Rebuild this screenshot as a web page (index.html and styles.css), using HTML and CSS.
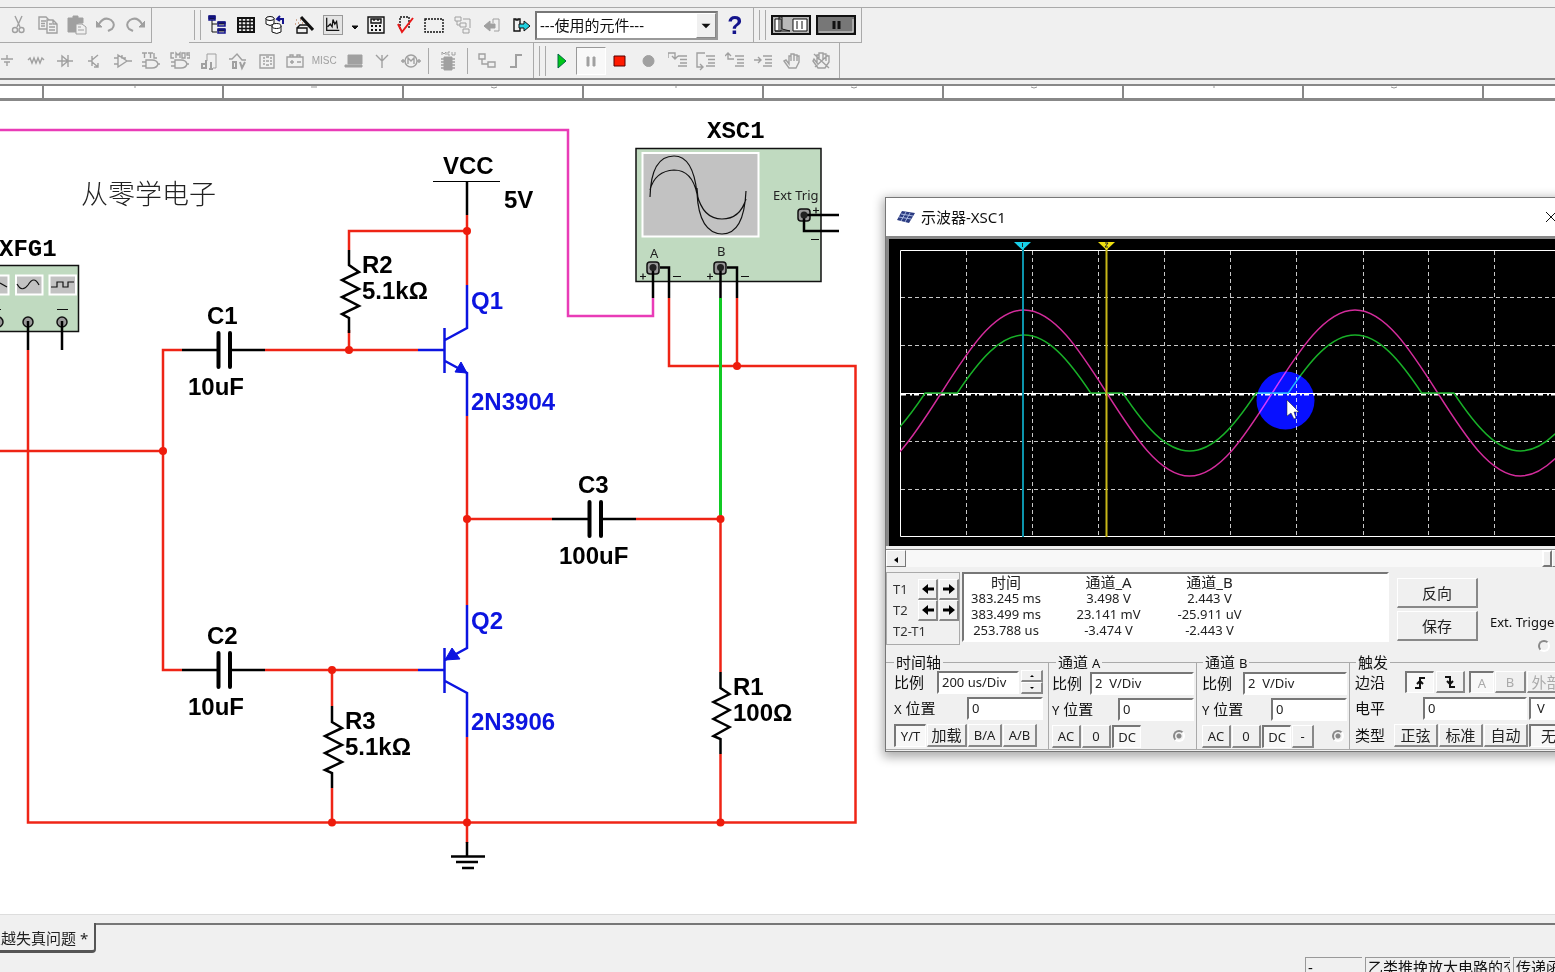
FILE: index.html
```html
<!DOCTYPE html>
<html lang="zh-CN">
<head>
<meta charset="utf-8">
<title>交越失真问题</title>
<link rel="stylesheet" href="styles.css">
</head>
<body>
<header class="toolbars">
  <div class="bar">
    <div class="panel panel-edit">
      <div class="icons icons-5 muted">
        <button class="tool" aria-label="剪切"><svg viewBox="0 0 20 20"><path class="mid" d="M6 1l5 11M13 1L8 12"/><circle class="mid" cx="6" cy="15" r="2.500"/><circle class="mid" cx="12.500" cy="15" r="2.500"/></svg></button>
        <button class="tool" aria-label="复制"><svg viewBox="0 0 20 20"><path class="mid" d="M1 2h7l3 3v9H1zM3 6h5M3 8.500h4M3 11h4"/><path class="paper mid" d="M9 5h6l4 4v9H9zM15 5v4h4M11 9h3M11 12h6M11 15h6"/></svg></button>
        <button class="tool" aria-label="粘贴"><svg viewBox="0 0 20 20"><path class="solid" d="M1 3h5V1h5v2h5v5h-5v9H1z"/><path class="paper" d="M5 4h7M9 9h6l4 3v7H9zM11 12h3M11 15h6"/></svg></button>
        <button class="tool" aria-label="撤销"><svg viewBox="0 0 20 20"><path class="thick" d="M3 9Q8 1 15 5q5 4 1 9l-4 2"/><path class="solid" d="M0 6v6h6z"/></svg></button>
        <button class="tool" aria-label="重做"><svg viewBox="0 0 20 20"><path class="thick" d="M17 9Q12 1 5 5 0 9 4 14l4 2"/><path class="solid" d="M20 6v6h-6z"/></svg></button>
      </div>
    </div>
    <div class="panel panel-main">
      <span class="grip"></span>
      <div class="icons icons-5">
        <button class="tool" aria-label="设计工具箱"><svg viewBox="0 0 20 20"><path d="M5 5v12h5M5 9h5"/><path class="navy" d="M2 1h6v3H2zM11 7h7v2h-7zM11 14h7v2h-7z"/><path class="navybox" d="M2 1h6v4H2zM11 7h7v4h-7zM11 14h7v4h-7z"/></svg></button>
        <button class="tool" aria-label="电子表格"><svg viewBox="0 0 20 20"><path class="thick" d="M2 3h16v14H2z"/><path class="mid" d="M6 3v14M10 3v14M14 3v14M2 6.500h16M2 10h16M2 13.500h16"/></svg></button>
        <button class="tool" aria-label="数据库"><svg viewBox="0 0 20 20"><path class="white" d="M1 3v6q4 3 8 0V3M7 11v6q5 3 9 0v-6"/><ellipse class="white" cx="5" cy="3.500" rx="4" ry="2"/><ellipse class="white" cx="11.500" cy="11" rx="4.500" ry="2.500"/><path class="navyline" d="M12 4h6v5M15 1l-3 3 3 2"/></svg></button>
        <button class="tool" aria-label="元件向导"><svg viewBox="0 0 20 20"><path class="heavy" d="M7 2l12 13"/><path class="mid" d="M3 13l3-3h9M3 13h10v5H3z"/><path class="gold" d="M2 5h1M4 8h1M1 9h1M6 5h1M8 8h1"/></svg></button>
        <button class="tool framed" aria-label="图形编辑器"><svg viewBox="0 0 20 20"><path class="mid" d="M3 2v14h14M4 12l3-3 2 3 1-8 2 5 2-3 1 8"/></svg></button>
      </div>
      <button class="drop" aria-label="图形选项"><svg viewBox="0 0 8 5"><path class="solid" d="M1 1h6L4 4z"/></svg></button>
      <div class="icons icons-6">
        <button class="tool" aria-label="后处理器"><svg viewBox="0 0 20 20"><path class="mid" d="M2 2h16v16H2zM5 4h10v4H5zM8 4v2M12 4v2"/><path class="thick" d="M5 11h2M9 11h2M13 11h2M5 15h2M9 15h2M13 15h2"/></svg></button>
        <button class="tool" aria-label="电气规则检查"><svg viewBox="0 0 20 20"><path class="mid" stroke-dasharray="2 1" d="M5 14V2h9v12"/><path class="redline" d="M3 9l4 8L18 3"/></svg></button>
        <button class="tool" aria-label="捕获区域"><svg viewBox="0 0 20 20"><path class="mid" stroke-dasharray="2 1" d="M1 4h18v13H1z"/></svg></button>
        <button class="tool muted" aria-label="转到父电路图"><svg viewBox="0 0 20 20"><path d="M2 2h6v4H2zM7 8h6v4H7zM10 14h6v4h-6zM4 6v4h3M10 4h7v9"/></svg></button>
        <button class="tool muted" aria-label="反向注解"><svg viewBox="0 0 20 20"><path class="solid" d="M2 11l6-5v3h5v4H8v3z"/><path d="M11 8V4h6v12h-5"/></svg></button>
        <button class="tool" aria-label="正向注解"><svg viewBox="0 0 20 20"><path class="mid" d="M3 4v12h6V4H7v1H5V4z"/><path class="cyan" d="M8 9h5V6l6 5-6 5v-3H8z"/></svg></button>
      </div>
      <div class="combo">
        <select aria-label="使用的元件"><option>---使用的元件---</option></select>
        <svg class="combo-arrow" viewBox="0 0 20 22"><path class="solid" d="M5 9h10l-5 5z"/></svg>
      </div>
      <button class="tool help" aria-label="帮助">?</button>
    </div>
    <div class="panel panel-sim">
      <span class="grip"></span>
      <button class="switch" aria-label="仿真开关"><svg viewBox="0 0 40 20"><path class="switch-face" d="M1 1h38v18H1z"/><path class="white" d="M22 4h14v12H22z"/><path class="white" d="M4 4h6v12H4z"/><path d="M8 15V2l3 0v12l8 2H4M26 6v8M31 6v8"/></svg></button>
      <button class="switch" aria-label="暂停开关"><svg viewBox="0 0 40 20"><path class="switch-dark" d="M1 1h38v18H1z"/><path class="light" d="M3 17h34V4"/><path class="heavy" d="M18 6v8M23 6v8"/></svg></button>
    </div>
  </div>
  <div class="bar bar-second">
    <div class="panel panel-parts">
      <div class="icons icons-15 muted">
        <button class="tool" aria-label="电源"><svg viewBox="0 0 20 20"><path class="mid" d="M10 4v4M4 8h12M7 11h6M10 11v4"/></svg></button>
        <button class="tool" aria-label="电阻"><svg viewBox="0 0 20 20"><path class="mid" d="M2 9l2-2 2 5 2-5 2 5 2-5 2 5 2-5 2 2"/></svg></button>
        <button class="tool" aria-label="二极管"><svg viewBox="0 0 20 20"><path class="mid" d="M2 10h16M7 5v10l6-5zM13 4v12"/></svg></button>
        <button class="tool" aria-label="晶体管"><svg viewBox="0 0 20 20"><path class="mid" d="M4 10h4M8 5v10M8 9l6-5M8 11l6 5M10 16h4v-4"/></svg></button>
        <button class="tool" aria-label="运放"><svg viewBox="0 0 20 20"><path class="mid" d="M5 4v12l9-6zM1 7h4M1 13h4M14 10h5M9 4v3h4"/></svg></button>
        <button class="tool" aria-label="TTL"><svg viewBox="0 0 20 20"><path class="mid" d="M1 2h5M3.500 2v5M7 2h5M9.500 2v5M13 2v5h3M5 9h6q5 0 6 4-1 4-6 4H5zM1 11h4M1 15h4M17 13h2"/></svg></button>
        <button class="tool" aria-label="CMOS"><svg viewBox="0 0 20 20"><path class="mid" d="M4 2H1v5h3M6 7V2l2 2 2-2v5M12 2h3v5h-3zM20 2h-3v2h3v3h-3M5 9h6q5 0 6 4-1 4-6 4H5zM1 11h4M1 15h4M17 13h2"/></svg></button>
        <button class="tool" aria-label="数字元件"><svg viewBox="0 0 20 20"><path d="M8 10V3h9v14h-3"/><path class="thick" d="M7 9v9M7 13H3v4h4M12 11v7M10 18h4"/></svg></button>
        <button class="tool" aria-label="混合元件"><svg viewBox="0 0 20 20"><path class="mid" d="M1 8h3l5-5 5 6h4"/><path class="thick" d="M5 11h3v6H5zM12 11l2 6 3-6"/></svg></button>
        <button class="tool" aria-label="指示器"><svg viewBox="0 0 20 20"><path class="mid" d="M3 4h14v13H3zM6 7h2M6 10h2M6 13h2M13 7h2M13 10h2M13 13h2M9 6h3M9 10h3M9 14h3"/></svg></button>
        <button class="tool" aria-label="电源元件"><svg viewBox="0 0 20 20"><path class="mid" d="M2 6h16v10H2zM5 6V4h3v2M12 6V4h3v2M5 11h4M7 9v4M12 11h4"/></svg></button>
        <button class="tool misc">MISC</button>
        <button class="tool" aria-label="外设"><svg viewBox="0 0 20 20"><path class="solid" d="M5 4h14v9H5zM2 14h17v2H2z"/></svg></button>
        <button class="tool" aria-label="射频"><svg viewBox="0 0 20 20"><path class="mid" d="M4 4l6 6 6-6M10 4v13"/></svg></button>
        <button class="tool" aria-label="机电"><svg viewBox="0 0 20 20"><circle class="mid" cx="10" cy="10" r="6"/><path class="mid" d="M0 10h4M16 10h4M7 13V7l3 3 3-3v6M2 8v4M18 8v4"/></svg></button>
      </div>
      <span class="sep"></span>
      <button class="tool muted lone" aria-label="MCU"><svg viewBox="0 0 20 20"><path d="M4 4V1l2 2 2-2v3M12 1h-2v3h2M14 1v3h3V1"/><path class="solid" d="M6 6h8v13H6z"/><path class="mid" d="M3 8h14M3 11h14M3 14h14M3 17h14"/></svg></button>
      <span class="sep"></span>
      <button class="tool muted" aria-label="层次块"><svg viewBox="0 0 20 20"><path class="mid" d="M2 3h6v5H2zM11 11h7v5h-7zM5 8v5h6"/></svg></button>
      <button class="tool muted" aria-label="总线"><svg viewBox="0 0 20 20"><path class="thick" d="M4 16h6V4h6"/></svg></button>
    </div>
    <div class="panel panel-run">
      <span class="grip"></span>
      <div class="icons icons-10 muted">
        <button class="tool" aria-label="运行"><svg viewBox="0 0 20 20"><path class="play" d="M7 3v14l8-7z"/></svg></button>
        <button class="tool pressed" aria-label="暂停"><svg viewBox="0 0 20 20"><path class="solid" d="M6 6h2v9H6zM12 6h2v9h-2z"/></svg></button>
        <button class="tool" aria-label="停止"><svg viewBox="0 0 20 20"><path class="stop" d="M4 5h11v10H4z"/></svg></button>
        <button class="tool" aria-label="断点"><svg viewBox="0 0 20 20"><circle class="solid" cx="9.500" cy="10" r="5.500"/></svg></button>
        <button class="tool" aria-label="步入"><svg viewBox="0 0 20 20"><path class="mid" d="M0 7V2h7v6M4 5l3 3 3-3M10 5h9M12 8.500h7M12 12h7M10 15h9"/></svg></button>
        <button class="tool" aria-label="步过"><svg viewBox="0 0 20 20"><path class="mid" d="M9 2H1v14h6M4 13l3 3-3 3M10 5h9M12 8.500h7M12 12h7M10 15h9"/></svg></button>
        <button class="tool" aria-label="步出"><svg viewBox="0 0 20 20"><path class="mid" d="M3 2v6h6M0 5l3-3 3 3M10 5h9M12 8.500h7M12 12h7M10 15h9"/></svg></button>
        <button class="tool" aria-label="运行到光标"><svg viewBox="0 0 20 20"><path class="mid" d="M1 9h7M5 6l3 3-3 3M10 5h9M12 8.500h7M12 12h7M10 15h9"/></svg></button>
        <button class="tool" aria-label="切换断点"><svg viewBox="0 0 20 20"><path class="mid" d="M2 10l5 7h7l3-6V5h-2v5V4h-3v6V3H9v7V5H7v8L4 9z"/></svg></button>
        <button class="tool" aria-label="清除断点"><svg viewBox="0 0 20 20"><path class="mid" d="M2 10l5 7h7l4-6V5h-3v5V3h-3v6V2H8v7V4H6v8L3 8zM3 3l15 14M17 4L4 16"/></svg></button>
      </div>
    </div>
  </div>
</header>

<svg class="ruler" aria-hidden="true"><path d="M43 0v13M223 0v13M403 0v13M583 0v13M763 0v13M943 0v13M1123 0v13M1303 0v13M1483 0v13"/><path class="digit" d="M134 1h2M311 1h6M491 1q3 2 6 0M675 1h2M851 1q3 2 6 0M1031 1q3 2 6 0M1213 1h2M1391 1q3 2 6 0"/></svg>

<main class="canvas">
  <svg class="schematic" aria-label="乙类推挽放大电路">
    <g transform="translate(0 -101)">
      <g class="wire">
        <path class="w-pink" d="M0 130H568V316H653V298"/>
        <path class="w-red" d="M28 350V822.500H855.500V366H669V298M737 298V366M0 451H163M182 350H163V670H182M265 350H418M349 330V350M349 250V231H467M467 215V285M467 416V605M467 519H552M636 519H720.500V672M467 737V843M265 670H418M332 670V706M332 788V822M720.500 754V822"/>
        <path class="w-green" d="M720.500 298V519"/>
      </g>
      <g class="part">
        <path d="M467 182V215M182 350H217M231 350H265M182 670H217M231 670H265M552 519H589M603 519H636M467 842V856M349 250v15l10 7-17 8 17 9-17 8 17 9-17 8 7 4V333M332 706v16l10 6-17 8 17 9-17 8 17 9-17 8 7 3v15M720.500 672v16l9 6-16 8 16 8-16 9 16 8-16 9 7 3v15"/>
        <path class="thin" d="M433 181.500H500"/>
        <path class="plate" d="M218.500 333v34M230 333v34M218.500 653v34M230 653v34M589.500 502v34M601 502v34"/>
        <path d="M451 856.500h34M456 862h22M462 868h12"/>
      </g>
      <g class="transistor">
        <path d="M467 285v43l-22 12M444.500 328v45M418 350h26M445 361l22 12v43M467 605v43l-22 12M444.500 648v45M418 670h26M445 681l22 12v44"/>
        <path class="fill" d="M467 373l-12-1 6-10zM445 660l7-12 8 11z"/>
      </g>
      <g class="dots"><circle cx="467" cy="231" r="4"/><circle cx="349" cy="350" r="4"/><circle cx="163" cy="451" r="4"/><circle cx="467" cy="519" r="4"/><circle cx="720.500" cy="519" r="4"/><circle cx="737" cy="366" r="4"/><circle cx="332" cy="670" r="4"/><circle cx="332" cy="822.500" r="4"/><circle cx="467" cy="822.500" r="4"/><circle cx="720.500" cy="822.500" r="4"/></g>
      <g class="instrument">
        <path class="case" d="M-30 265.500H78.500V331.500H-30zM636 148.500H821V281.500H636z"/>
        <path class="screen" d="M-20 275.500H8.500V294.500H-20zM16 275.500H42.500V294.500H16zM49.500 275.500H76V294.500H49.500zM642.500 153H758.500V236.500H642.500z"/>
        <path class="trace" d="M0 283l7 4M17 284q5 9 11 1 6-10 11 0M51 287h6v-5h6v5h5v-5h6M57 309.500h11M0 309.500h1M650 197q1-41 24-41 19 0 23 37 2 40 25 41 22 0 24-43M650 190q5-19 24-20 18 0 23 24 6 25 25 25 18 0 24-20M697 188l1 11"/>
        <g class="lead"><circle cx="-2" cy="322" r="5"/><circle cx="28" cy="322" r="5"/><circle cx="62" cy="322" r="5"/><rect x="647" y="262" width="12" height="12" rx="3"/><rect x="714" y="262" width="12" height="12" rx="3"/><rect x="798" y="209" width="12" height="12" rx="3"/></g>
        <path class="pin" d="M28 321V350M62 321V350M653 268V298M660 267.500H669V298M720.500 268V298M727 267.500H737V298M804 215H839M804 215V231H839"/>
        <g><circle cx="653" cy="267.500" r="3.500"/><circle cx="720.500" cy="267.500" r="3.500"/><circle cx="804" cy="215" r="3.500"/></g>
        <path class="trace" d="M640 276.500h6M643 273.500v6M673 276.500h8M707 276.500h6M710 273.500v6M741 276.500h8M813 210.500h6M816 207.500v6M811 239.500h8"/>
        <text x="773" y="200">Ext Trig</text><text x="650" y="258">A</text><text x="717" y="256">B</text>
      </g>
      <g class="label"><text x="443" y="174">VCC</text><text x="504" y="208">5V</text><text x="362" y="273">R2</text><text x="362" y="299">5.1kΩ</text><text x="207" y="324">C1</text><text x="188" y="395">10uF</text><text x="578" y="493">C3</text><text x="559" y="564">100uF</text><text x="207" y="644">C2</text><text x="188" y="715">10uF</text><text x="345" y="729">R3</text><text x="345" y="755">5.1kΩ</text><text x="733" y="695">R1</text><text x="733" y="721">100Ω</text></g>
      <g class="label blue"><text x="471" y="309">Q1</text><text x="471" y="410">2N3904</text><text x="471" y="629">Q2</text><text x="471" y="730">2N3906</text></g>
      <g class="label mono"><text x="707" y="138">XSC1</text><text x="-1" y="256">XFG1</text></g>
      <text class="note" x="81" y="204">从零学电子</text>
    </g>
  </svg>

  <section class="window" aria-label="示波器-XSC1">
    <div class="titlebar">
      <svg class="app-icon" viewBox="0 0 20 14"><path class="chip" d="M6 1l13 2-6 10L1 10z"/><path class="chip-line" d="M5 4l12 2M3 7l12 2M10 2L5 11M14 3L9 12"/></svg>
      <span class="title">示波器-XSC1</span>
      <button class="close" aria-label="关闭"><svg viewBox="0 0 12 12"><path d="M1 1l10 10M11 1L1 11"/></svg></button>
    </div>
    <div class="scope">
      <svg class="scope-view" aria-label="波形">
        <defs><clipPath id="plot"><path d="M900 250H1600V537H900z"/></clipPath></defs>
        <g transform="translate(-889 -239)">
          <path class="grid" d="M966.500 251V537M1032.500 251V537M1098.500 251V537M1164.500 251V537M1230.500 251V537M1296.500 251V537M1363.500 251V537M1428.500 251V537M1494.500 251V537M901 297.500H1600M901 345.500H1600M901 441.500H1600M901 489.500H1600"/>
          <path class="axis" d="M901 393.500H1600"/><path class="axis-ticks" d="M901 394.500H1600"/>
          <path class="frame" d="M1600 250.500H900.500V536.500H1600"/>
          <g clip-path="url(#plot)">
            <path class="ch-a" d="M858.500 476c30 0 55.750-40.500 82.750-83c27-42.500 52.800-83 82.750-83c30 0 55.750 40.500 82.750 83c27 42.500 52.800 83 82.750 83c30 0 55.750-40.500 82.750-83c27-42.500 52.800-83 82.750-83c30 0 55.750 40.500 82.750 83c27 42.500 52.800 83 82.750 83c30 0 55.750-40.500 82.750-83"/>
            <path class="ch-b" d="M858.500 451c24 0 44.700-25 66.700-58h32.100c22-33 43-58 66.700-58c24 0 44.700 25 66.700 58h32.100c22 33 43 58 66.700 58c24 0 44.700-25 66.700-58h32.100c22-33 43-58 66.700-58c24 0 44.700 25 66.700 58h32.100c22 33 43 58 66.700 58c24 0 44.700-25 66.700-58"/>
          </g>
          <path class="cur-1" d="M1023 246V537"/><path class="cur-2" d="M1106.500 246V537"/>
          <path class="flag-1" d="M1014 242h17l-8.500 8z"/><path class="flag-2" d="M1098 242h17l-8.500 8z"/>
          <path class="flag-mark" d="M1022.500 243v4M1105 243h3l-3 4h3"/>
          <circle class="halo" cx="1285.500" cy="400.500" r="29"/>
          <path class="pointer" d="M1287 400v16l4-3 3 6 2-1-2-6h5z"/>
        </g>
      </svg>
    </div>
    <div class="scroll"><button class="scroll-left" aria-label="向左"><svg viewBox="0 0 6 8"><path class="solid" d="M5 1v6L1 4z"/></svg></button><span class="scroll-thumb"></span><button class="scroll-right" aria-label="向右"></button></div>
    <div class="measure">
      <div class="markers">
        <span>T1</span><button class="btn step" aria-label="T1 左"><svg viewBox="0 0 12 12"><path d="M0 6l6-5v3.500h6v3H6V11z"/></svg></button><button class="btn step" aria-label="T1 右"><svg viewBox="0 0 12 12"><path d="M12 6L6 1v3.500H0v3h6V11z"/></svg></button>
        <span>T2</span><button class="btn step" aria-label="T2 左"><svg viewBox="0 0 12 12"><path d="M0 6l6-5v3.500h6v3H6V11z"/></svg></button><button class="btn step" aria-label="T2 右"><svg viewBox="0 0 12 12"><path d="M12 6L6 1v3.500H0v3h6V11z"/></svg></button>
        <span class="diff">T2-T1</span>
      </div>
      <div class="readout">
        <table>
          <thead><tr><th>时间</th><th>通道_A</th><th>通道_B</th></tr></thead>
          <tbody>
            <tr><td>383.245 ms</td><td>3.498 V</td><td>2.443 V</td></tr>
            <tr><td>383.499 ms</td><td>23.141 mV</td><td>-25.911 uV</td></tr>
            <tr><td>253.788 us</td><td>-3.474 V</td><td>-2.443 V</td></tr>
          </tbody>
        </table>
      </div>
      <div class="actions"><button class="btn cjk">反向</button><button class="btn cjk">保存</button></div>
      <label class="ext"><span>Ext. Trigger</span><input type="radio" name="ext" disabled></label>
    </div>
    <div class="groups">
      <fieldset class="group g-time">
        <legend>时间轴</legend>
        <div class="field"><label for="tb">比例</label><input id="tb" class="wide" value="200 us/Div"><span class="spin"><button class="btn" aria-label="增加"><svg viewBox="0 0 6 4"><path d="M1 3h4L3 1z"/></svg></button><button class="btn" aria-label="减少"><svg viewBox="0 0 6 4"><path d="M1 1h4L3 3z"/></svg></button></span></div>
        <div class="field"><label for="xp"><span class="latin">X</span> 位置</label><input id="xp" value="0"></div>
        <div class="modes"><button class="btn down">Y/T</button><button class="btn cjk">加载</button><button class="btn">B/A</button><button class="btn">A/B</button></div>
      </fieldset>
      <fieldset class="group g-a">
        <legend>通道 <span class="latin">A</span></legend>
        <div class="field"><label for="as">比例</label><input id="as" class="scale" value="2  V/Div"></div>
        <div class="field"><label for="ap"><span class="latin">Y</span> 位置</label><input id="ap" value="0"></div>
        <div class="modes"><button class="btn">AC</button><button class="btn">0</button><button class="btn down">DC</button><input class="dot" type="radio" name="cha" aria-label="通道 A 端子" checked disabled></div>
      </fieldset>
      <fieldset class="group g-b">
        <legend>通道 <span class="latin">B</span></legend>
        <div class="field"><label for="bs">比例</label><input id="bs" class="scale" value="2  V/Div"></div>
        <div class="field"><label for="bp"><span class="latin">Y</span> 位置</label><input id="bp" value="0"></div>
        <div class="modes"><button class="btn">AC</button><button class="btn">0</button><button class="btn down">DC</button><button class="btn minus">-</button><input class="dot" type="radio" name="chb" aria-label="通道 B 端子" checked disabled></div>
      </fieldset>
      <fieldset class="group g-trig">
        <legend>触发</legend>
        <div class="field"><span class="name">边沿</span><span class="edges"><button class="btn down" aria-label="上升沿"><svg viewBox="0 0 12 14"><path d="M1 12h5V2h5M3 8l3-3 3 3"/></svg></button><button class="btn" aria-label="下降沿"><svg viewBox="0 0 12 14"><path d="M1 2h5v10h5M3 6l3 3 3-3"/></svg></button></span><span class="sources"><button class="btn down" disabled>A</button><button class="btn" disabled>B</button><button class="btn cjk" disabled>外部</button></span></div>
        <div class="field"><label for="lv">电平</label><input id="lv" class="level" value="0"><input class="unit" aria-label="单位" value="V"></div>
        <div class="modes"><span class="name">类型</span><button class="btn cjk">正弦</button><button class="btn cjk">标准</button><button class="btn cjk">自动</button><button class="btn cjk down none">无</button></div>
      </fieldset>
    </div>
  </section>
</main>

<footer class="foot">
  <nav class="tabs"><a class="tab" href="#">交越失真问题 *</a></nav>
  <div class="status"><span class="cell cell-dash">-</span><span class="cell cell-name">乙类推挽放大电路的交</span><span class="cell cell-fn">传递函数</span></div>
</footer>
</body>
</html>
```
FILE: styles.css
```css
* { box-sizing: border-box; }

body {
  margin: 0;
  height: 100vh;
  display: flex;
  flex-direction: column;
  overflow: hidden;
  background: #f0f0f0;
  color: #111;
  font: 13px/16px "Noto Sans", "Noto Sans CJK SC", sans-serif;
}

button { margin: 0; padding: 0; border: 0; background: none; color: inherit; font: inherit; }
input, select { margin: 0; font: inherit; color: inherit; }

/* Toolbars */
.toolbars { flex: none; padding-top: 7px; border-bottom: 2px solid #888; }
.bar { display: flex; height: 36px; border-top: 1px solid #aaa; }
.bar-second { height: 35px; border-top: 0; }
.panel { display: flex; align-items: center; border-right: 1px solid #aaa; border-bottom: 1px solid #aaa; }
.bar-second .panel { border-bottom: 0; }
.panel-edit { width: 152px; padding-left: 5px; }
.panel-main { margin-left: 37px; width: 565px; padding-left: 5px; }
.panel-sim { width: 108px; padding-left: 5px; gap: 5px; }
.panel-parts { width: 534px; }
.panel-run { width: 306px; padding-left: 5px; }
.grip { flex: none; width: 7px; height: 30px; border: solid #aaa; border-width: 0 1px; margin-right: 1px; }
.panel-sim .grip { margin-right: 0; }
.icons { display: flex; flex: none; }
.icons .tool { flex: 1; }
.icons-5 { width: 144px; }
.icons-6 { width: 173px; }
.icons-10 { width: 288px; }
.icons-15 { width: 432px; margin-left: -7px; }
.panel-main .icons-5 { margin-left: 1px; }
.tool { display: flex; flex: none; align-items: center; justify-content: center; width: 29px; height: 28px; }
.tool svg { width: 20px; height: 20px; }
.tool svg, .drop svg, .switch svg { fill: none; stroke: #111; stroke-width: 1; }
.toolbars .muted svg, .toolbars .muted .tool svg, .toolbars .tool.muted svg { stroke: #a0a0a0; }
.muted { color: #a0a0a0; }
.toolbars .mid { stroke-width: 1.400; }
.toolbars .thick { stroke-width: 2; }
.toolbars .heavy { stroke-width: 3; }
.toolbars .solid { fill: #111; }
.toolbars .muted .solid { fill: #a0a0a0; }
.paper { fill: #f0f0f0; }
.white { fill: #fff; }
.navy { fill: #14148c; }
.navybox { stroke: #14148c; stroke-width: 1.500; }
.light { stroke: #ddd; }
.navyline { stroke: #14148c; stroke-width: 2; }
.gold { stroke: #b06030; }
.redline { stroke: #e81818; stroke-width: 2; }
.cyan { fill: #20d0e0; }
.toolbars .play { fill: #00c818; stroke: #064; }
.toolbars .stop { fill: #ff1a00; stroke: #500; }
.framed svg { border: 1px solid #999; background: #e4e4e4; }
.drop { width: 15px; height: 28px; }
.drop svg { width: 8px; height: 5px; }
.misc { font: 11px/16px "Liberation Sans", sans-serif; font-size: 10px; }
.toolbars .pressed { border: 1px solid; border-color: #999 #fff #fff #999; background: #f8f8f8; }
.sep { flex: none; width: 1px; height: 26px; background: #aaa; margin: 0 4px; }
.panel-parts .sep:first-of-type { margin-left: 3px; }
.lone { width: 30px; }
.combo { display: flex; flex: none; width: 183px; height: 29px; border: 2px solid; border-color: #777 #999 #999 #777; background: #fff; }
.combo select { flex: 1; min-width: 0; padding: 0 3px; border: 0; background: #fff; appearance: none; font-size: 15px; }
.combo-arrow { width: 20px; background: #f0f0f0; border: 1px solid; border-color: #fff #888 #888 #fff; }
.help { width: 34px; color: #14148c; font: bold 25px/28px "Liberation Sans", sans-serif; }
.switch { width: 40px; height: 22px; }
.switch svg { display: block; width: 40px; height: 22px; }
.switch-face { fill: #b8b8b8; stroke-width: 2; }
.switch-dark { fill: #777; stroke-width: 2; }

.ruler { flex: none; display: block; width: 100%; height: 17px; margin-top: 4px; border-top: 2px solid #888; border-bottom: 3px solid #888; background: #fff; fill: none; stroke: #888; stroke-width: 2; }
.digit { stroke: #999; stroke-width: 1; }

/* Schematic */
.canvas { position: relative; flex: 1; min-height: 0; overflow: hidden; background: #fff; }
.schematic { display: block; width: 100%; height: 100%; fill: none; stroke-width: 2; }
.wire { stroke-width: 3; opacity: .96; }
.w-red { stroke: #ee1c0c; stroke-width: 2.500; }
.w-pink { stroke: #e935b5; stroke-width: 2.500; }
.w-green { stroke: #08c81c; }
.part { stroke: #000; stroke-width: 2.500; }
.thin { stroke-width: 1; }
.plate { stroke-width: 4; stroke-linecap: round; }
.transistor { stroke: #0c14e0; stroke-width: 2.500; }
.fill { fill: #0c14e0; stroke-width: 1; }
.dots { fill: #ee1c0c; }
.case { fill: #c0dac0; stroke: #111; stroke-width: 1.500; }
.screen { fill: #c2c2c2; stroke: #fff; }
.trace { stroke: #111; stroke-width: 1.200; }
.lead { fill: #999; stroke: #111; stroke-width: 1.500; }
.pin { stroke: #000; stroke-width: 2.500; }
.instrument circle { fill: #222; }
.instrument .lead circle { fill: #999; }
.instrument text { fill: #222; font: 13px "Noto Sans", sans-serif; }
.label text { fill: #000; font: bold 24px "Liberation Sans", sans-serif; }
.blue text { fill: #0c14e0; }
.label.mono text { font-family: "Liberation Mono", monospace; }
.note { fill: #222; font: 300 27px "Noto Sans CJK SC", sans-serif; }

/* Oscilloscope window */
.window { position: absolute; left: 885px; top: 96px; width: 690px; border: 1px solid #777; background: #f0f0f0; box-shadow: 0 3px 10px 2px #0005; }
.titlebar { display: flex; align-items: center; height: 38px; padding: 0 17px 0 10px; background: #fff; }
.app-icon { width: 20px; height: 14px; }
.chip { fill: #2a3a80; }
.chip-line { fill: none; stroke: #a8b8e0; }
.title { margin-left: 5px; font-size: 15px; line-height: 20px; }
.close { margin-left: auto; width: 12px; height: 12px; }
.close svg { display: block; width: 12px; height: 12px; stroke: #111; }
.scope { padding: 3px 3px 0; background: #888; border-bottom: 3px solid #f0f0f0; }
.scope-view { display: block; width: 100%; height: 307px; background: #000; fill: none; }
.grid { stroke: #c8c8c8; stroke-dasharray: 4 3; }
.axis { stroke: #fff; }
.axis-ticks { stroke: #fff; stroke-width: 2; stroke-dasharray: 5 4 2 2; }
.frame { stroke: #fff; }
.ch-a { stroke: #d42c9c; stroke-width: 1.400; }
.ch-b { stroke: #18b028; stroke-width: 1.400; }
.cur-1 { stroke: #0c94ac; stroke-width: 2; }
.cur-2 { stroke: #c8b818; stroke-width: 2; }
.flag-1 { fill: #18d0e8; }
.flag-2 { fill: #f0e010; }
.flag-mark { stroke: #222; }
.halo { fill: #0810ff; mix-blend-mode: screen; }
.pointer { fill: #fff; stroke: #222; stroke-width: .5; }

.scroll { display: flex; height: 18px; background: #f8f8f8; border-top: 1px solid #888; }
.scroll-left, .scroll-right { width: 20px; background: #f0f0f0; border: 1px solid; border-color: #fff #777 #777 #fff; }
.scroll-left svg { width: 6px; height: 8px; }
.scroll-right { width: 22px; }
.scroll-thumb { margin-left: auto; width: 10px; background: #f0f0f0; border: 2px solid; border-color: #fff #777 #777 #fff; }

.measure { display: flex; align-items: flex-start; height: 87px; padding-top: 5px; }
.markers { display: grid; grid-template-columns: 24px 20px 20px; grid-template-rows: 21px 21px 20px; width: 74px; height: 73px; padding: 6px 0 0 6px; column-gap: 1px; border: 1px solid #aaa; line-height: 20px; color: #333; }
.diff { grid-column: 1 / -1; }
.readout { width: 427px; height: 70px; margin-left: 2px; border: 2px solid; border-color: #777 #fff #fff #777; background: #fff; }
table { border-collapse: collapse; color: #222; }
th, td { width: 101px; padding: 0; text-align: center; font-weight: 400; line-height: 16px; }
th:first-child, td:first-child { width: 94px; padding-right: 10px; }
th { font-size: 15px; }
.actions { display: flex; flex-direction: column; gap: 3px; width: 81px; margin: 6px 0 0 8px; }
.actions .btn { height: 30px; }
.ext { display: flex; flex-direction: column; align-items: center; gap: 10px; margin: 42px 0 0 12px; white-space: nowrap; }
input[type="radio"] { appearance: none; width: 12px; height: 12px; border: 2px solid; border-color: #888 #fff #fff #888; border-radius: 50%; }
.ext input { margin-left: 38px; }

.btn { display: inline-flex; align-items: center; justify-content: center; border: solid; border-width: 1px 2px 2px 1px; border-color: #fff #888 #888 #fff; background: #f0f0f0; color: #222; white-space: nowrap; }
.btn.down { border-width: 2px 1px 1px 2px; border-color: #777 #fff #fff #777; background: #f8f8f8; }
.btn:disabled { color: #aaa; }
.cjk, legend, label, .name { font-size: 15px; white-space: nowrap; }
.btn.cjk { font-size: 15px; }
.ext span, .latin { font-size: 13px; }
.step svg { width: 12px; height: 12px; }

.groups { display: flex; padding-bottom: 1px; }
.group { flex: none; min-width: 0; margin: 0; padding: 0 2px 1px 4px; border: 1px solid #aaa; border-left: 0; }
.g-time { width: 163px; padding: 0 5px 1px 8px; }
.g-a { width: 148px; padding-left: 3px; }
.g-b { width: 153px; padding-left: 5px; }
.g-trig { width: 224px; padding-left: 5px; }
legend { margin-left: 4px; padding: 0 2px; line-height: 16px; }
.g-time legend { margin-left: 0; }
.g-b legend, .g-trig legend { margin-left: 1px; }
.field { display: flex; align-items: center; height: 24px; margin-bottom: 2px; }
.field label, .field .name { flex: none; line-height: 20px; }
.field input { flex: none; width: 76px; height: 23px; margin-left: auto; padding: 0 3px; border: 2px solid; border-color: #777 #fff #fff #777; border-radius: 0; background: #fff; color: #222; }
.field .wide { width: 82px; margin-right: 2px; }
.field .scale { width: 104px; white-space: pre; }
.spin { display: flex; flex-direction: column; width: 22px; height: 24px; }
.spin .btn { flex: 1; min-height: 0; }
.spin svg { width: 6px; height: 4px; }
.modes { display: flex; align-items: center; gap: 1px; height: 24px; margin-top: 3px; }
.modes .name { flex: none; line-height: 20px; }
.modes .btn { flex: none; height: 23px; min-width: 29px; padding: 0 4px; }
.modes .minus { min-width: 22px; }
.g-time .modes .btn { min-width: 34px; padding: 0 2px; }
.g-time .modes .cjk { min-width: 40px; }
.g-time .modes .down { min-width: 32px; }
.modes .dot { width: 12px; margin: 0 9px 0 auto; background: radial-gradient(circle, #888 2px, transparent 3px); }
.g-b .dot { margin-right: 3px; }
.edges { display: flex; flex: none; gap: 2px; margin-left: 20px; }
.edges .btn { width: 29px; height: 22px; }
.edges svg { width: 12px; height: 14px; fill: none; stroke: #111; stroke-width: 2; }
.sources { display: flex; flex: none; gap: 1px; margin-left: 4px; }
.sources .btn { width: 25px; height: 22px; }
.sources .btn + .btn { width: 31px; }
.sources .btn:last-child { width: 40px; }
.field .level { width: 104px; margin-left: 38px; }
.field .unit { width: 38px; margin-left: 2px; padding-left: 6px; }
.g-trig .modes .btn { width: 44px; }
.g-trig .modes .none { width: 38px; }
.g-trig .name + .btn { margin-left: 8px; }

/* Sheet tabs and status */
.foot { flex: none; height: 58px; overflow: hidden; border-top: 1px solid #ddd; padding-top: 8px; }
.tabs { display: flex; height: 34px; }
.tabs::after { content: ""; flex: 1; border-top: 2px solid #777; }
.tab { height: 30px; margin-left: -19px; padding: 6px 6px 0 5px; border: solid #555; border-width: 0 2px 3px 0; border-radius: 0 0 4px 0; color: #222; text-decoration: none; font-size: 15px; line-height: 18px; white-space: nowrap; }
.status { display: flex; justify-content: flex-end; gap: 3px; margin-right: -40px; }
.cell { height: 20px; overflow: hidden; border: solid #999; border-width: 1px 0 0 1px; padding-left: 2px; font-size: 15px; line-height: 18px; white-space: nowrap; }
.cell-dash { width: 57px; }
.cell-name { width: 145px; }
.cell-fn { width: 82px; }
```
